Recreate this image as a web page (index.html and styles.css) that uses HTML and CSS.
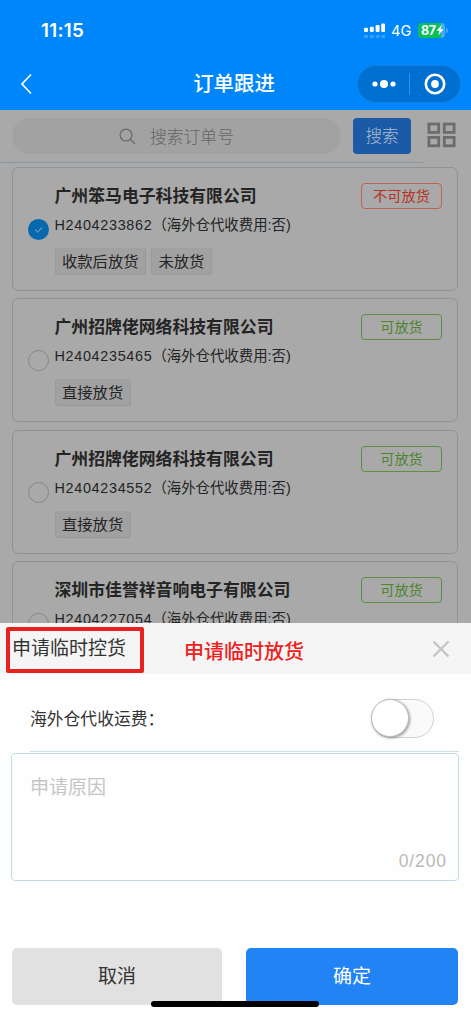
FILE: index.html
```html
<!DOCTYPE html>
<html lang="zh-CN">
<head>
<meta charset="utf-8">
<title>订单跟进</title>
<link rel="stylesheet" href="styles.css">
</head>
<body>
<div class="phone">
  <header class="header">
    <div class="status">
      <span class="time">11:15</span>
      <svg class="signal" width="21" height="15" viewBox="0 0 21 15"><g fill="#fff"><rect x="0" y="4.8" width="4" height="4.2" rx="1.3"/><rect x="5.8" y="3.8" width="4" height="5.2" rx="1.2"/><rect x="11.6" y="2" width="4" height="7" rx="1.2"/><rect x="17.2" y="0.6" width="3.9" height="8.4" rx="1.2"/></g><g fill="#38a3fa"><rect x="0" y="12" width="4" height="3" rx="1"/><rect x="5.8" y="12" width="4" height="3" rx="1"/><rect x="11.6" y="12" width="4" height="3" rx="1"/><rect x="17.2" y="12" width="3.8" height="3" rx="1"/></g></svg>
      <span class="network">4G</span>
      <span class="battery"><span>87</span><svg width="8" height="12" viewBox="0 0 8 12"><path d="M5.8 0.8 0.5 6.8h3L2.2 11.2 7.5 5.2h-3z" fill="#fff"/></svg></span>
      <span class="battery-tip"></span>
    </div>
    <div class="nav">
      <svg class="back" width="12" height="22" viewBox="0 0 12 22"><path d="M11 1.5 2 11l9 9.5" fill="none" stroke="#fff" stroke-width="1.7"/></svg>
      <h1 class="nav-title">订单跟进</h1>
      <div class="capsule">
        <svg width="24" height="10" viewBox="0 0 24 10" fill="#fff"><circle cx="3" cy="5" r="2.6"/><circle cx="12" cy="5" r="4"/><circle cx="21" cy="5" r="2.6"/></svg>
        <i class="capsule-line"></i>
        <svg width="22" height="22" viewBox="0 0 22 22"><circle cx="11" cy="11" r="9.2" fill="none" stroke="#fff" stroke-width="2.6"/><circle cx="11" cy="11" r="3.9" fill="#fff"/></svg>
      </div>
    </div>
  </header>

  <main class="orders">
    <div class="search-row">
      <div class="search-input">
        <svg width="17" height="17" viewBox="0 0 17 17" fill="none" stroke="#6c6c6c" stroke-width="1.3"><circle cx="7" cy="7" r="5.9"/><path d="m11.3 11.3 4.7 4.5"/></svg>
        <span>搜索订单号</span>
      </div>
      <div class="search-button">搜索</div>
      <svg class="grid-icon" width="29" height="26" viewBox="0 0 29 26" fill="none" stroke="#6c6c6c" stroke-width="2.8"><rect x="1.9" y="2" width="9.8" height="8.4"/><rect x="17.3" y="2" width="9.8" height="8.4"/><rect x="1.9" y="15.4" width="9.8" height="8.4"/><rect x="17.3" y="15.4" width="9.8" height="8.4"/></svg>
    </div>
    <div class="list">
      <article class="card">
        <span class="check checked"><svg width="21" height="21" viewBox="0 0 21 21"><path d="m7.2 10.8 2.4 2.2 4.5-4.4" fill="none" stroke="#a9b9c5" stroke-width="1"/></svg></span>
        <div class="info">
          <h2>广州笨马电子科技有限公司</h2>
          <p><span class="number">H2404233862</span>（海外仓代收费用:否)</p>
          <div class="tags"><span>收款后放货</span><span>未放货</span></div>
        </div>
        <span class="badge blocked">不可放货</span>
      </article>
      <article class="card">
        <span class="check"></span>
        <div class="info">
          <h2>广州招牌佬网络科技有限公司</h2>
          <p><span class="number">H2404235465</span>（海外仓代收费用:否)</p>
          <div class="tags"><span>直接放货</span></div>
        </div>
        <span class="badge">可放货</span>
      </article>
      <article class="card">
        <span class="check"></span>
        <div class="info">
          <h2>广州招牌佬网络科技有限公司</h2>
          <p><span class="number">H2404234552</span>（海外仓代收费用:否)</p>
          <div class="tags"><span>直接放货</span></div>
        </div>
        <span class="badge">可放货</span>
      </article>
      <article class="card">
        <span class="check"></span>
        <div class="info">
          <h2>深圳市佳誉祥音响电子有限公司</h2>
          <p><span class="number">H2404227054</span>（海外仓代收费用:否)</p>
        </div>
        <span class="badge">可放货</span>
      </article>
    </div>
  </main>

  <section class="sheet">
    <div class="sheet-head">
      <span class="sheet-title">申请临时控货</span>
      <span class="sheet-note">申请临时放货</span>
      <svg class="close" width="18" height="18" viewBox="0 0 18 18"><path d="m1.5 1.5 15 15m0-15-15 15" stroke="#c3c3c3" stroke-width="2.2" fill="none"/></svg>
      <span class="marker"></span>
    </div>
    <div class="fee-row">
      <span>海外仓代收运费：</span>
      <span class="switch"><i></i></span>
    </div>
    <div class="reason">
      <span class="placeholder">申请原因</span>
      <span class="counter">0/200</span>
    </div>
    <div class="actions">
      <div class="button cancel">取消</div>
      <div class="button confirm">确定</div>
    </div>
    <span class="home-bar"></span>
  </section>
</div>
</body>
</html>
```
FILE: styles.css
```css
* { box-sizing: border-box; }
body { margin: 0; font-family: "Liberation Sans", "Noto Sans CJK SC", sans-serif; background: #fefefe; }
h1, h2, p { margin: 0; }
svg { display: block; flex: none; }
.phone { width: 471px; height: 1011px; display: flex; flex-direction: column; overflow: hidden; white-space: nowrap; }

.header { height: 110px; background: #0086fb; color: #fff; flex: none; }
.status { height: 57px; padding: 3px 23px 0 41px; display: flex; align-items: center; }
.time { font: 600 18.8px/20px Inter, sans-serif; letter-spacing: 0.3px; flex: 1; padding-top: 1px; }
.signal { margin-right: 6px; }
.network { font: 400 14.6px/20px Inter, sans-serif; width: 27px; padding-top: 1px; }
.battery { width: 27px; height: 15px; border-radius: 4px; background: linear-gradient(90deg, #08bf5b 23px, #4aabf3 23px); display: flex; align-items: center; padding-left: 3px; font: 700 12.5px/15px Inter, sans-serif; letter-spacing: -0.4px; }
.battery-tip { width: 2px; height: 5px; margin-left: 1px; border-radius: 0 2px 2px 0; background: #4aabf3; }
.nav { height: 53px; display: grid; grid-template-columns: 104px 1fr 104px; align-items: center; padding: 0 10px 0 20px; }
.nav-title { font-size: 20.4px; font-weight: 500; line-height: 28px; text-align: center; padding: 1px 13px 0 0; }
.capsule { width: 104px; height: 38px; border-radius: 19px; background: #006fd2; border: 1px solid #1580dc; display: flex; align-items: center; padding: 0 14px; justify-content: space-between; }
.capsule-line { width: 1px; height: 22px; background: #3391e4; margin-left: -2px; }

.orders { height: 513px; overflow: hidden; background: #a9a9a9; flex: none; }
.search-row { height: 53px; display: flex; align-items: flex-start; padding: 8px 0 0 12px; background: linear-gradient(#8696a3, #8696a3) 0 52px / 423px 1px no-repeat; }
.search-input { width: 329px; height: 36px; border-radius: 18px; background: #a2a2a2; color: #666; font-weight: 300; display: flex; align-items: center; padding-left: 107px; gap: 14px; font-size: 16.8px; }
.search-button { width: 58px; height: 36px; margin-left: 12px; border-radius: 4px; background: #1a5aa7; color: #adbdce; text-align: center; font-size: 16.5px; font-weight: 300; line-height: 37px; }
.grid-icon { margin: 4px 0 0 16px; }
.list { padding: 4px 13px 0 12px; display: flex; flex-direction: column; gap: 7.4px; }
.card { height: 124px; flex: none; border: 1px solid #929292; border-radius: 6px; display: flex; align-items: flex-start; padding: 15px 15px 0; }
.check { width: 21px; height: 21px; margin-top: 36px; border: 1.3px solid #858585; border-radius: 50%; flex: none; }
.checked { border: 0; background: #0868ae; }
.info { flex: 1; padding: 2px 0 0 5.5px; color: #242424; }
.info h2 { font-size: 16.85px; font-weight: 700; line-height: 24px; }
.info p { font-size: 14.4px; line-height: 22px; margin-top: 5px; }
.number { letter-spacing: 0.68px; }
.tags { display: flex; gap: 5px; margin-top: 12px; }
.tags span { height: 27px; padding: 0 6.5px; border: 1px solid #999; border-top-color: #a0a0a0; border-radius: 3px; background: #a1a1a1; font-size: 15.3px; line-height: 25px; }
.badge { width: 81px; height: 26px; border: 1px solid #5e8d45; border-radius: 4px; color: #4e8430; font-size: 14.2px; line-height: 24px; text-align: center; }
.blocked { border-color: #bd6259; color: #b63127; }

.sheet { height: 388px; position: relative; background: #fefefe; color: #333; }
.sheet-head { height: 51px; background: #f5f5f5; position: relative; display: flex; align-items: center; padding: 0 21px 0 12px; }
.sheet-title { width: 172px; font-size: 19px; line-height: 28px; }
.sheet-note { flex: 1; font-size: 20px; font-weight: 500; color: #ee2020; line-height: 28px; padding-top: 6px; }
/* Highlight drawn over the sheet title. */
.marker { position: absolute; left: 6px; top: 4px; width: 138px; height: 46px; border: 4px solid #e92120; border-radius: 2px; }
.fee-row { height: 78px; margin: 0 12px 0 30px; padding: 11px 25px 0 0; border-bottom: 1px solid #d0dee8; display: flex; align-items: center; justify-content: space-between; font-size: 16.8px; }
.switch { width: 63px; height: 39px; border: 1px solid #d2d2d2; border-radius: 20px; background: #fafafa; }
.switch i { display: block; width: 38px; height: 38px; margin: -1px; border-radius: 50%; background: #fff; border: 1px solid #c0c0c0; box-shadow: 1px 1px 3px rgba(0,0,0,.4); }
.reason { height: 128px; margin: 1px 12px 0 11px; padding: 20px 11px 8px 18px; border: 1px solid #c3dcec; border-radius: 4px; display: flex; flex-direction: column; justify-content: space-between; }
.placeholder { font-size: 19px; line-height: 28px; color: #c5c5c5; }
.counter { align-self: flex-end; font-size: 17.5px; line-height: 22px; letter-spacing: 0.9px; color: #b9b9b9; }
.actions { display: grid; grid-template-columns: 210px 212px; gap: 24px; margin: 67px 0 0 12px; }
.button { height: 57px; border-radius: 5px; text-align: center; font-size: 19px; line-height: 57px; }
.cancel { background: #e1e1e1; }
.confirm { background: #2283f5; color: #fff; }
.home-bar { position: absolute; left: 151px; top: 378px; width: 168px; height: 6px; border-radius: 3px; background: #000; }
```
